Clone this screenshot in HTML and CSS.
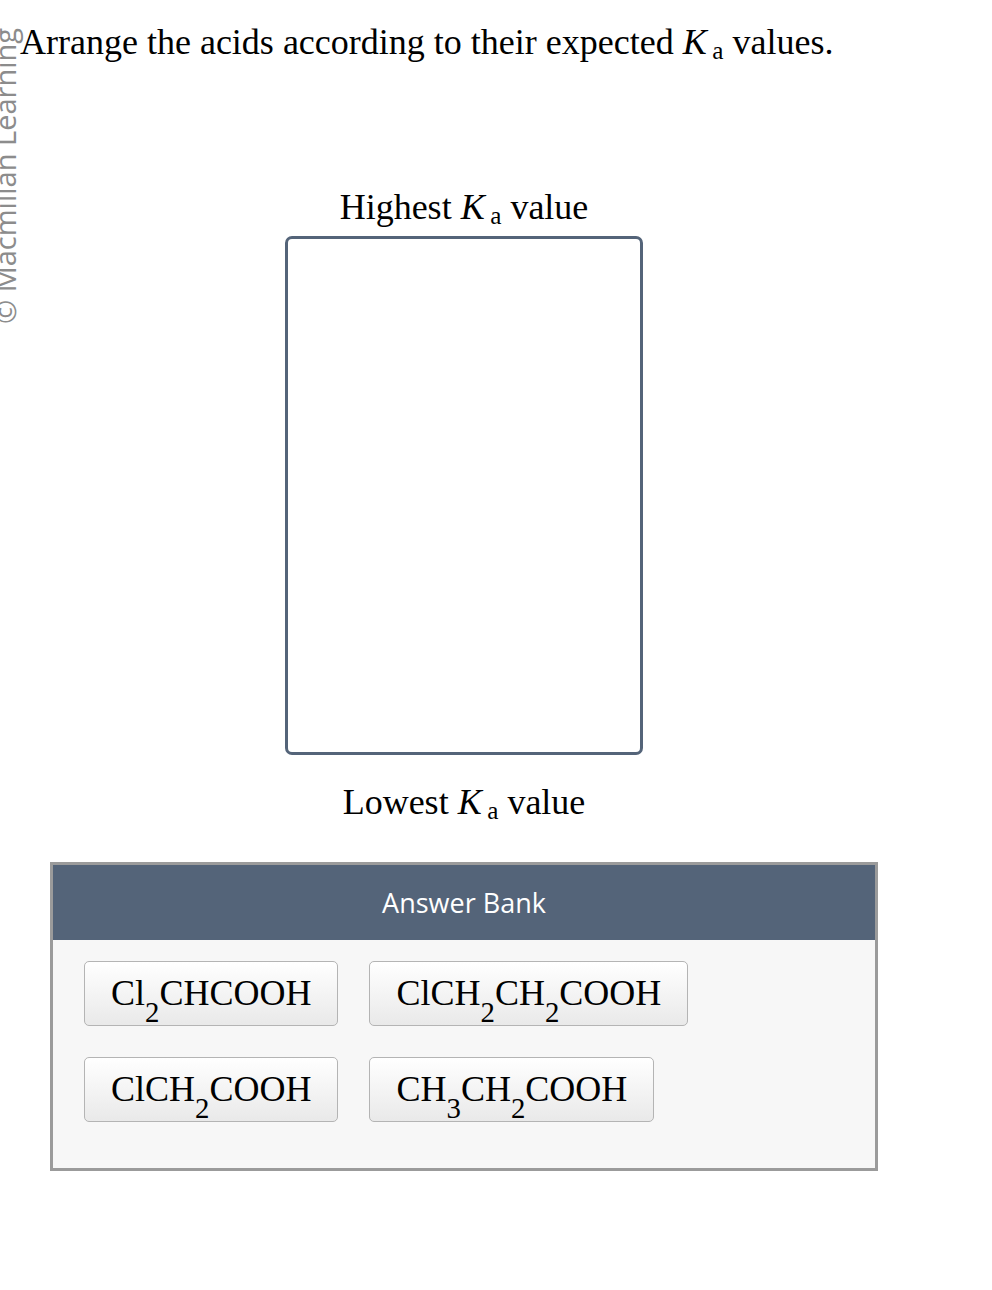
FILE: index.html
```html
<!DOCTYPE html>
<html lang="en">
<head>
  <meta charset="UTF-8" />
  <meta name="viewport" content="width=device-width, initial-scale=1.0"/>
  <title>Ranking | Acid Strength</title>
  <link rel="stylesheet" href="styles.css">
</head>
<body>
  <div class="watermark">© Macmillan Learning</div>

  <p class="prompt">Arrange the acids according to their expected <i>K</i><sub class="ka">a</sub> values.</p>

  <div class="workspace">
    <div class="ranking">
      <div class="rank-label">Highest <i>K</i><sub class="ka">a</sub> value</div>
      <div class="drop-zone" id="drop-zone"></div>
      <div class="rank-label">Lowest <i>K</i><sub class="ka">a</sub> value</div>
    </div>

    <div class="answer-bank">
      <div class="bank-title">Answer Bank</div>
      <div class="bank-items">
        <button class="chip">Cl<sub>2</sub>CHCOOH</button>
        <button class="chip">ClCH<sub>2</sub>CH<sub>2</sub>COOH</button>
        <button class="chip">ClCH<sub>2</sub>COOH</button>
        <button class="chip">CH<sub>3</sub>CH<sub>2</sub>COOH</button>
      </div>
    </div>
  </div>
</body>
</html>
```

FILE: styles.css
```css
html, body {
  margin: 0;
  padding: 0;
  background: #ffffff;
}

body {
  font-family: "Liberation Serif", "Times New Roman", serif;
  font-size: 36px;
  line-height: 41px;
  color: #000;
  position: relative;
  overflow-x: hidden;
}

/* copyright strip running up the left edge */
.watermark {
  position: absolute;
  left: -9px;
  top: 324px;
  transform-origin: 0 0;
  transform: rotate(-90deg);
  font-family: "Open Sans", sans-serif;
  font-size: 29px;
  line-height: 28px;
  color: #8c8c8c;
  white-space: nowrap;
}

sub {
  line-height: 0;
  font-size: 0.8em;
  vertical-align: -0.58em;
}

sub.ka {
  font-size: 0.7em;
  vertical-align: -0.2em;
  margin-left: 0.22em;
}

.prompt {
  margin: 22px 0 0 20px;
}

.workspace {
  width: 828px;
  margin-left: 50px;
}

.ranking {
  display: flex;
  flex-direction: column;
  align-items: center;
  margin-top: 124px;
}

.rank-label {
  text-align: center;
}

.drop-zone {
  width: 358px;
  height: 519px;
  box-sizing: border-box;
  border: 3px solid #546479;
  border-radius: 7px;
  margin: 8px 0 27px;
}

.answer-bank {
  margin-top: 39px;
  border: 3px solid #9b9b9b;
  background: #f7f7f7;
}

.bank-title {
  height: 75px;
  background: #546479;
  color: #fff;
  font-family: "Open Sans", sans-serif;
  font-size: 27px;
  font-weight: 500;
  line-height: 75px;
  text-align: center;
}

.bank-items {
  display: flex;
  flex-wrap: wrap;
  gap: 31px;
  padding: 21px 31px 46px;
}

.chip {
  height: 65px;
  padding: 0 26px;
  font-family: "Liberation Serif", "Times New Roman", serif;
  font-size: 36px;
  line-height: 41px;
  color: #000;
  border: 1px solid #b4b4b4;
  border-radius: 5px;
  background: linear-gradient(to bottom, #ffffff, #e9e9e9);
  cursor: pointer;
}
```
